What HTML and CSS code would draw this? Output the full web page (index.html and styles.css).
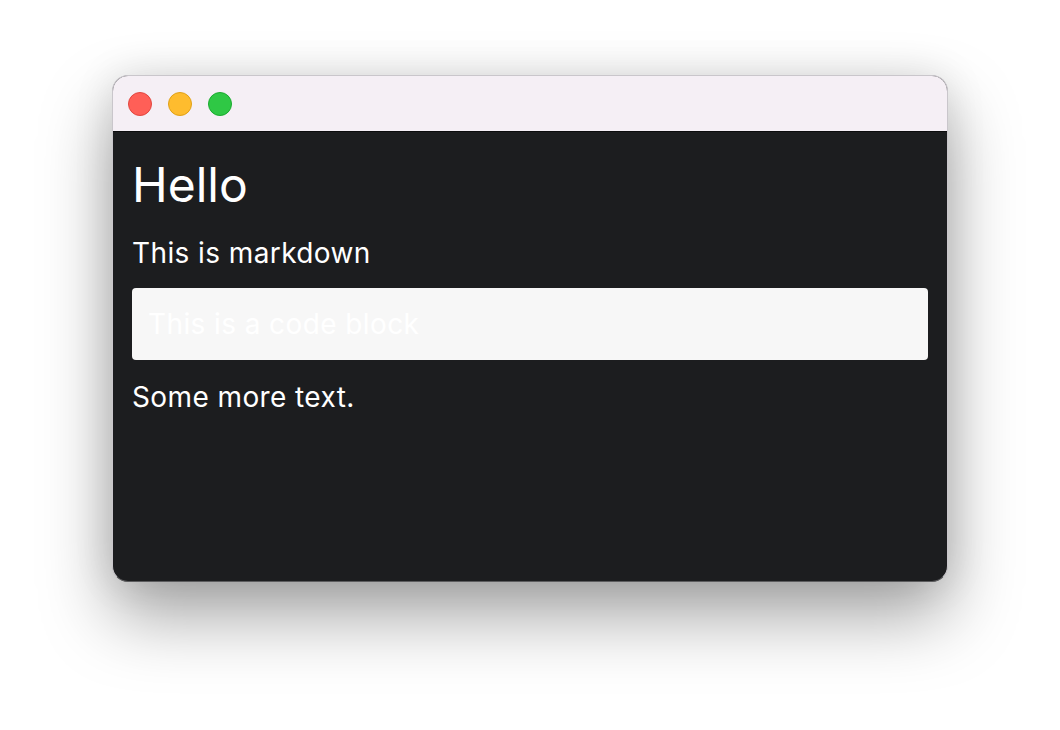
FILE: index.html
```html
<!DOCTYPE html>
<html lang="en">
<head>
  <meta charset="UTF-8" />
  <title>Markdown</title>
  <link rel="stylesheet" href="styles.css">
</head>
<body>

  <div class="window">
    <div class="titlebar">
      <span class="light red"></span>
      <span class="light yellow"></span>
      <span class="light green"></span>
    </div>

    <main class="content">
      <h1>Hello</h1>
      <p>This is markdown</p>
      <pre class="code">This is a code block</pre>
      <p>Some more text.</p>
    </main>
  </div>

</body>
</html>
```

FILE: styles.css
```css
* { box-sizing: border-box; }

html, body {
  height: 100%;
}

body {
  margin: 0;
  background-color: #ffffff;
  font-family: Inter, "Noto Sans", sans-serif;
  display: flex;
  justify-content: center;
  align-items: flex-start;
  padding-top: 75px;
  overflow: hidden;
}

.window {
  width: 836px;
  height: 507px;
  border-radius: 16px;
  overflow: hidden;
  background-color: #1c1d1f;
  border: 1px solid #c9c6cb;
  border-bottom-color: #5c5c5e;
  box-shadow: 0 34px 70px rgba(0, 0, 0, 0.36), 0 0 40px rgba(0, 0, 0, 0.1);
  display: flex;
  flex-direction: column;
}

.titlebar {
  height: 56px;
  flex-shrink: 0;
  background-color: #f5eff5;
  border-bottom: 1px solid #0c0c0d;
  display: flex;
  align-items: center;
  gap: 16px;
  padding: 0 0 0 15px;
}

.light {
  width: 24px;
  height: 24px;
  border-radius: 50%;
  border: 1px solid transparent;
}

.red {
  background-color: #ff5f57;
  border-color: #e2463f;
}

.yellow {
  background-color: #febc2e;
  border-color: #e1a116;
}

.green {
  background-color: #2fc845;
  border-color: #1aab2f;
}

.content {
  padding: 23px 19px 20px 19px;
  color: #ffffff;
}

.content h1 {
  margin: 0 0 22px;
  font-size: 48px;
  font-weight: 400;
  line-height: 59px;
}

.content p {
  margin: 0;
  font-size: 28px;
  line-height: 34px;
  letter-spacing: 0.4px;
}

.code {
  margin: 18px 0 20px;
  background-color: #f7f7f7;
  color: #ffffff;
  border-radius: 4px;
  padding: 19px 16px;
  font-family: Inter, "Noto Sans", sans-serif;
  font-size: 28px;
  line-height: 34px;
  letter-spacing: 0.4px;
}
```
